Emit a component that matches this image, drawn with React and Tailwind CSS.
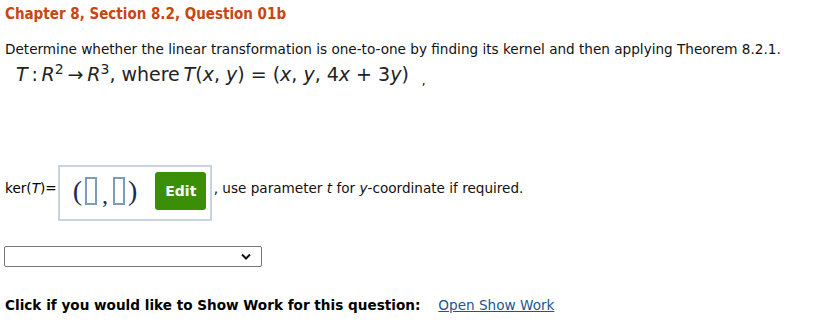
export default function App() {
  const serif = { fontFamily: '"Liberation Serif", serif' };
  return (
    <div className="w-[827px] h-[330px] bg-white text-black overflow-hidden" style={{ fontFamily: '"DejaVu Sans", Verdana, sans-serif' }}>
      <div className="px-[5px] pt-[5px]">
        {/* Title */}
        <h1 className="text-[15px] font-bold text-[#c8460f] leading-[18px]" style={{ fontFamily: '"DejaVu Sans Condensed", "DejaVu Sans", sans-serif' }}>
          Chapter 8, Section 8.2, Question 01b
        </h1>

        <p className="mt-[18px] text-[13.6px] leading-[16px] text-[#111]">
          Determine whether the linear transformation is one-to-one by finding its kernel and then applying Theorem 8.2.1.
        </p>

        {/* Math */}
        <div className="flex items-end pl-[11px] mt-[1px] h-[28px]">
          <span className="text-[19px] leading-[24px] text-[#222]">
            <i>T</i>&thinsp;:&thinsp;<i>R</i><sup className="text-[14px]">2</sup>&thinsp;→&thinsp;<i>R</i><sup className="text-[14px]">3</sup>, where&thinsp;<i>T</i>(<i>x</i>, <i>y</i>) = (<i>x</i>, <i>y</i>, 4<i>x</i> + 3<i>y</i>)
          </span>
          <span className="ml-[13px] text-[12px] leading-[14px] mb-[-2px]">,</span>
        </div>

        {/* ker row */}
        <div className="flex items-center mt-[79px] text-[13.6px]">
          <span className="mb-[10px]">ker(<i>T</i>)=</span>
          <div className="ml-[1px] w-[154px] h-[56px] border-2 border-[#c9d2de] flex items-center pb-[4px]">
            <span className="ml-[13px] text-[28px] leading-none text-[#1a2a5a]" style={serif}>(</span>
            <span className="w-[12px] h-[28px] border-2 border-[#7d9bba] ml-[3px]"></span>
            <span className="mx-[5px] text-[24px] text-[#1a2a5a] leading-none mt-[8px]" style={serif}>,</span>
            <span className="w-[12px] h-[28px] border-2 border-[#7d9bba]"></span>
            <span className="ml-[3px] text-[28px] leading-none text-[#1a2a5a]" style={serif}>)</span>
            <button className="ml-[18px] w-[51px] h-[38px] rounded-[3px] bg-[#3a8f06] text-white font-bold text-[14px]">Edit</button>
          </div>
          <span className="ml-[2px] mb-[10px] text-[#111]">, use parameter <i>t</i> for <i>y</i>-coordinate if required.</span>
        </div>

        {/* select */}
        <div className="mt-[25px] ml-[-1px] w-[258px] h-[21px] border border-[#767676] rounded-[2px] flex items-center justify-end pr-[10px]">
          <svg width="10" height="7" viewBox="0 0 10 7">
            <path d="M1 1.5 L5 5.5 L9 1.5" stroke="#111" strokeWidth="2" fill="none" />
          </svg>
        </div>

        {/* bottom */}
        <div className="mt-[28px] flex items-center text-[13.6px]">
          <span className="font-bold">Click if you would like to Show Work for this question:</span>
          <a className="ml-[18px] underline text-[#1c5595]" href="#">Open Show Work</a>
        </div>
      </div>
    </div>
  );
}
